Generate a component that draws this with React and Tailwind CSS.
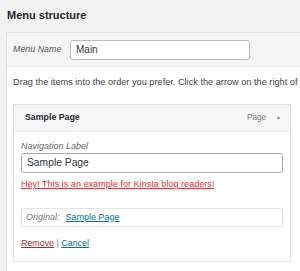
import React from "react";

export default function App() {
  return (
    <div
      className="w-[300px] h-[271px] overflow-hidden bg-[#f1f1f1] text-[#23282d]"
      style={{ fontFamily: '"Liberation Sans", Arial, sans-serif' }}
    >
      <div className="pl-[7px] pt-[8px] h-[32px] text-[11px] font-bold leading-[14px] text-[#23282d]">Menu structure</div>
      <div className="ml-[6px] w-[320px] border border-[#e2e2e2] bg-white h-[260px]">
        <div className="h-[34px] bg-[#f5f5f5] border-b border-[#e8e8e8] flex items-center pl-[6px]">
          <span className="italic text-[8.9px] text-[#555] w-[57px]">Menu Name</span>
          <div className="w-[180px] h-[20px] bg-white border border-[#bbb] rounded-[3px] flex items-center px-[5px] text-[10px] text-[#32373c]">
            Main
          </div>
        </div>
        <div className="pl-[6px] pt-[9px] text-[9.2px] text-[#444] whitespace-nowrap leading-[12px]">
          Drag the items into the order you prefer. Click the arrow on the right of
        </div>
        <div className="ml-[6px] mt-[16px] w-[278px] border border-[#e2e2e2] bg-white">
          <div className="h-[27px] bg-[#f6f6f6] border-b border-[#ececec] flex items-center pl-[11px] pr-[9px]">
            <span className="font-bold text-[8.8px] text-[#23282d] flex-1">Sample Page</span>
            <span className="text-[8.2px] text-[#777]">Page</span>
            <span className="ml-[10px] text-[5px] text-[#888]">▲</span>
          </div>
          <div className="px-[7px] pt-[8px] pb-[12px]">
            <div className="italic text-[9px] text-[#666] leading-[12px]">Navigation Label</div>
            <div className="mt-[1px] w-[262px] h-[20px] border border-[#aaa] rounded-[3px] flex items-center px-[5px] text-[10.3px] text-[#32373c]">
              Sample Page
            </div>
            <div className="mt-[5px] text-[9.1px] text-[#ff2d2d] underline leading-[12px]">
              Hey! This is an example for Kinsta blog readers!
            </div>
            <div className="mt-[18px] w-[262px] h-[19px] border border-[#e5e5e5] flex items-center px-[4px] text-[9px]">
              <span className="italic text-[#777]">Original:</span>
              <span className="ml-[6px] text-[#0073aa] underline">Sample Page</span>
            </div>
            <div className="mt-[10px] text-[8.9px] leading-[12px]">
              <span className="text-[#c4212a] underline">Remove</span>
              <span className="text-[#888]"> | </span>
              <span className="text-[#0073aa] underline">Cancel</span>
            </div>
          </div>
        </div>
      </div>
    </div>
  );
}
